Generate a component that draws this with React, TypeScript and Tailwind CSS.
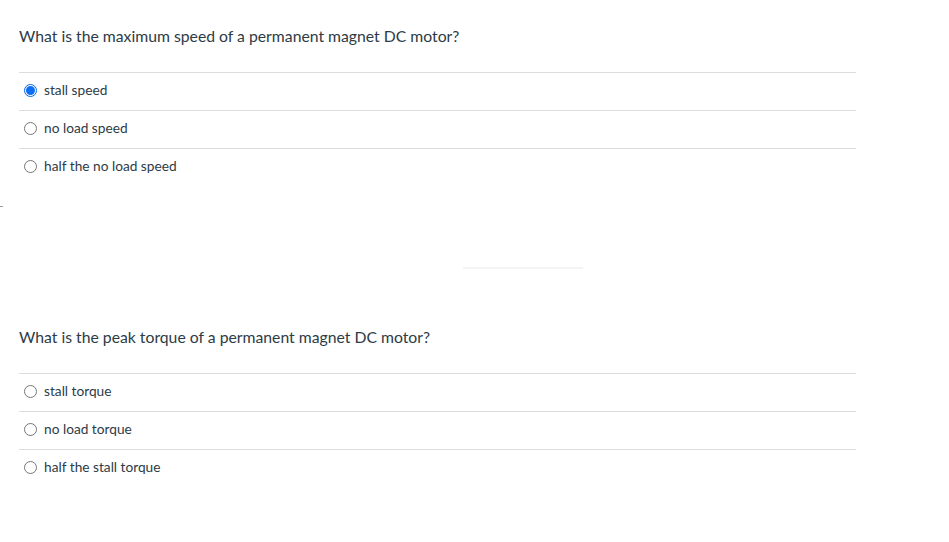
import React from 'react';

type Question = {
  text: string;
  options: string[];
  selected: number | null;
};

const questions: Question[] = [
  {
    text: 'What is the maximum speed of a permanent magnet DC motor?',
    options: ['stall speed', 'no load speed', 'half the no load speed'],
    selected: 0,
  },
  {
    text: 'What is the peak torque of a permanent magnet DC motor?',
    options: ['stall torque', 'no load torque', 'half the stall torque'],
    selected: null,
  },
];

function Radio({ checked }: { checked: boolean }) {
  if (checked) {
    return (
      <span className="w-[13px] h-[13px] rounded-full border border-[#0b63e5] bg-white flex items-center justify-center shrink-0">
        <span className="w-[9px] h-[9px] rounded-full bg-[#0b6ef3]" />
      </span>
    );
  }
  return <span className="w-[13px] h-[13px] rounded-full border border-[#767676] bg-white shrink-0" />;
}

function QuestionBlock({ q }: { q: Question }) {
  return (
    <div>
      <div className="text-[15.75px] leading-[24px] text-[#2d3b45]">{q.text}</div>
      <div className="mt-[24px] w-[837px]">
        {q.options.map((opt, i) => (
          <div key={opt} className="h-[38px] border-t border-[#dcdcdc] flex items-center pl-[5px] pb-[2px]">
            <Radio checked={q.selected === i} />
            <span className="ml-[7px] text-[13.7px] text-[#2d3b45]">{opt}</span>
          </div>
        ))}
      </div>
    </div>
  );
}

export default function App() {
  return (
    <div className="relative w-[949px] h-[542px] bg-white overflow-hidden" style={{ fontFamily: 'Lato, "Open Sans", sans-serif' }}>
      {/* stray marks from the screenshot */}
      <div className="absolute left-0 top-[206px] w-[3px] h-px bg-[#9a9a9a]" />
      <div className="absolute left-[463px] top-[267px] w-[120px] h-[2px] bg-[#f4f4f4]" />

      <div className="pt-[24px] pl-[19px]">
        <QuestionBlock q={questions[0]} />
        <div className="mt-[139px]">
          <QuestionBlock q={questions[1]} />
        </div>
      </div>
    </div>
  );
}
